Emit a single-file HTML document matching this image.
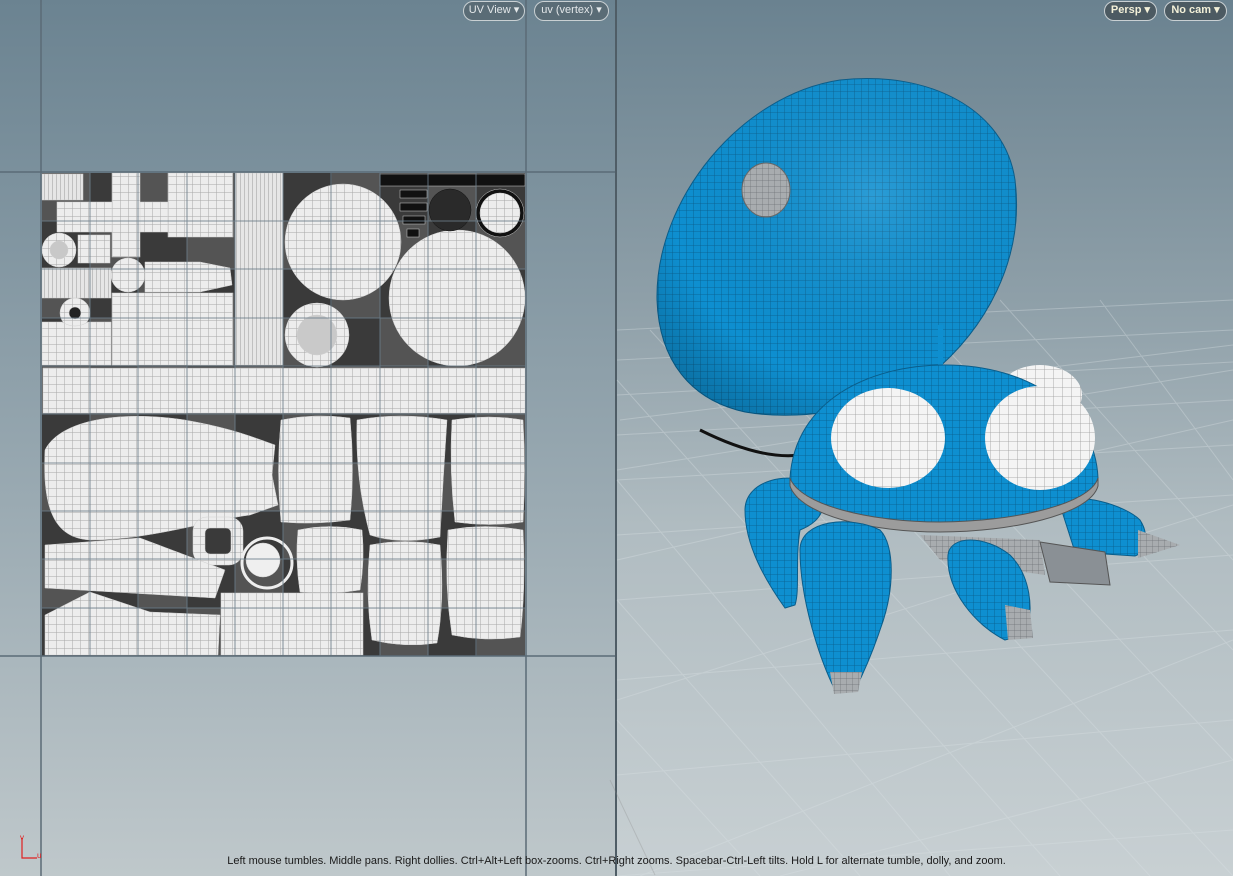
<!DOCTYPE html>
<html><head><meta charset="utf-8"><style>
html,body{margin:0;padding:0;width:1233px;height:876px;overflow:hidden;font-family:"Liberation Sans",sans-serif}
.pill{position:absolute;top:1px;height:20px;border:1.5px solid #c9d0d3;border-radius:10px;background:#5a6c76;color:#e4e8ea;font-size:11px;line-height:17px;padding:0;text-align:center;box-sizing:border-box;white-space:nowrap;overflow:hidden}
.pill.y{color:#f3f0d8;font-weight:bold;background:#4c5a62}
</style></head><body>
<svg width="1233" height="876" style="position:absolute;left:0;top:0">
<defs>
<linearGradient id="lbg" x1="0" y1="0" x2="0" y2="1"><stop offset="0" stop-color="#6b8391"/><stop offset="0.5" stop-color="#94a5ae"/><stop offset="1" stop-color="#bfc8cb"/></linearGradient>
<linearGradient id="rbg" x1="0" y1="0" x2="0" y2="1"><stop offset="0" stop-color="#6a8290"/><stop offset="0.35" stop-color="#8fa0a9"/><stop offset="0.6" stop-color="#b0bcc1"/><stop offset="1" stop-color="#c8d0d3"/></linearGradient>
<pattern id="chk" width="96.6" height="96.6" patternUnits="userSpaceOnUse" x="42" y="173"><rect width="96.6" height="96.6" fill="#3a3a3a"/><rect width="48.3" height="48.3" fill="#545454"/><rect x="48.3" y="48.3" width="48.3" height="48.3" fill="#545454"/></pattern>
<pattern id="g" width="8" height="8" patternUnits="userSpaceOnUse"><rect width="8" height="8" fill="#ededed"/><path d="M0 0H8M0 0V8" stroke="#a8a8a8" stroke-width="1"/></pattern>
<pattern id="gs" width="4" height="10" patternUnits="userSpaceOnUse"><rect width="4" height="10" fill="#e6e6e6"/><path d="M0 0V10" stroke="#999" stroke-width="1"/></pattern>
<pattern id="bl" width="7" height="7" patternUnits="userSpaceOnUse"><rect width="7" height="7" fill="#0e8fd0"/><path d="M0 0H7M0 0V7" stroke="#0a5d8a" stroke-width="0.8"/></pattern>
<pattern id="wh" width="9" height="9" patternUnits="userSpaceOnUse"><rect width="9" height="9" fill="#f4f4f4"/><path d="M0 0H9M0 0V9" stroke="#9a9a9a" stroke-width="0.8"/></pattern>
<pattern id="gr" width="6" height="6" patternUnits="userSpaceOnUse"><rect width="6" height="6" fill="#a8acaf"/><path d="M0 0H6M0 0V6" stroke="#6d7276" stroke-width="0.7"/></pattern>
<radialGradient id="shade" cx="0.6" cy="0.35" r="0.8"><stop offset="0" stop-color="#fff" stop-opacity="0.12"/><stop offset="0.7" stop-color="#000" stop-opacity="0"/><stop offset="1" stop-color="#000" stop-opacity="0.25"/></radialGradient>
</defs>
<rect x="0" y="0" width="616" height="876" fill="url(#lbg)"/>
<rect x="42" y="173" width="483" height="483" fill="url(#chk)"/>
<g stroke="#cfcfcf" stroke-width="0.5">
<rect x="42" y="174" width="41" height="26" fill="url(#gs)"/>
<rect x="57" y="202" width="111" height="30" fill="url(#g)"/>
<rect x="112" y="173" width="28" height="84" fill="url(#g)"/>
<rect x="168" y="173" width="65" height="64" fill="url(#g)"/>
<rect x="235" y="173" width="48" height="192" fill="url(#gs)"/>
<circle cx="343" cy="242" r="58" fill="url(#g)"/>
<circle cx="457" cy="298" r="68" fill="url(#g)"/>
<circle cx="317" cy="335" r="32" fill="url(#g)"/>
<circle cx="317" cy="335" r="20" fill="#c9c9c9"/>
<rect x="380" y="174" width="145" height="12" fill="#111"/>
<rect x="400" y="190" width="27" height="8" fill="#111"/><rect x="400" y="203" width="27" height="8" fill="#111"/><rect x="403" y="216" width="22" height="8" fill="#111"/><rect x="407" y="229" width="12" height="8" fill="#111"/>
<circle cx="450" cy="210" r="21" fill="#2a2a2a" stroke="#111"/>
<circle cx="500" cy="213" r="24" fill="#111"/><circle cx="500" cy="213" r="20" fill="url(#g)"/>
<circle cx="59" cy="250" r="17" fill="url(#g)"/><circle cx="59" cy="250" r="9" fill="#c8c8c8"/>
<rect x="78" y="235" width="32" height="28" fill="url(#g)"/>
<circle cx="128" cy="275" r="17" fill="url(#g)"/>
<path d="M145 262H200L230 268L232 285L200 292H145Z" fill="url(#g)"/>
<rect x="42" y="268" width="69" height="30" fill="url(#gs)"/>
<circle cx="75" cy="313" r="15" fill="url(#g)"/><circle cx="75" cy="313" r="6" fill="#222"/>
<path d="M42 322H62Q75 330 88 322H111V365H42Z" fill="url(#g)"/>
<rect x="112" y="293" width="121" height="72" fill="url(#g)"/>
<rect x="43" y="368" width="482" height="45" fill="url(#g)"/>
<path d="M45 450C60 420 120 410 185 420C230 428 250 436 275 445L272 475L278 505L250 515C210 520 150 540 90 540C55 538 42 510 45 450Z" fill="url(#g)"/>
<path d="M281 420Q315 413 350 418Q355 470 350 520Q315 525 281 522Q276 470 281 420Z" fill="url(#g)"/>
<path d="M357 420Q400 412 447 420Q443 480 440 537Q400 545 370 535Q355 480 357 420Z" fill="url(#g)"/>
<path d="M452 420Q490 414 523 420Q526 470 523 522Q490 527 455 522Q449 470 452 420Z" fill="url(#g)"/>
<path d="M298 530Q330 523 362 530Q365 560 360 590Q330 595 300 592Q295 560 298 530Z" fill="url(#g)"/>
<path d="M370 545Q405 538 440 545Q445 600 437 643Q405 648 372 640Q365 595 370 545Z" fill="url(#g)"/>
<path d="M448 530Q485 523 523 530Q526 590 520 637Q485 642 452 635Q444 585 448 530Z" fill="url(#g)"/>
<rect x="193" y="517" width="50" height="48" rx="14" fill="url(#g)"/><rect x="205" y="528" width="26" height="26" rx="5" fill="#3a3a3a"/>
<circle cx="267" cy="563" r="25" fill="none" stroke="#eee" stroke-width="3"/><circle cx="263" cy="560" r="17" fill="#efefef"/>
<path d="M45 545L140 538L225 570L215 598L45 588Z" fill="url(#g)"/>
<path d="M45 615L90 592L150 612L220 615L218 655H45Z" fill="url(#g)"/>
<rect x="221" y="593" width="142" height="62" fill="url(#g)"/>
</g>
<g stroke="#6b7d8a" stroke-width="1" opacity="0.85">
<path d="M90 173V656M138 173V656M187 173V656M235 173V656M283 173V656M331 173V656M380 173V656M428 173V656M476 173V656"/>
<path d="M42 221H525M42 269H525M42 318H525M42 366H525M42 414H525M42 463H525M42 511H525M42 559H525M42 608H525"/>
</g>
<g stroke="#5b6b76" stroke-width="1.5"><path d="M41 0V876M526 0V876M0 172H616M0 656H616"/></g>
<path d="M22 838V858H37" stroke="#e02020" fill="none" stroke-width="1.2"/>
<text x="20" y="840" fill="#e02020" font-size="8">v</text><text x="37" y="858" fill="#e02020" font-size="8">u</text>
<rect x="616" y="0" width="617" height="876" fill="url(#rbg)"/>
<rect x="615" y="0" width="2" height="876" fill="#4f5d66"/>
<g stroke="#dbe2e5" stroke-width="1" opacity="0.35" fill="none">
<path d="M617 330L1233 300M617 360L1233 330M617 395L1233 362M617 435L1233 400M617 480L1233 445M617 535L1233 495M617 600L1233 555M617 680L1233 630M617 775L1233 720M617 876L1233 830"/>
<path d="M640 876L1233 640M617 700L1233 505M617 560L1233 420M617 470L1233 370M780 876L1233 760M620 420L1233 345"/>
<path d="M1233 876L700 300M1150 876L650 330M1060 876L617 380M950 876L617 480M860 876L617 600M760 876L617 720M1233 760L800 300M1233 650L900 300M1233 560L1000 300M1233 480L1100 300"/>
</g>
<path d="M655 875L610 780" stroke="#888" opacity="0.3"/>
<!-- robot -->
<path d="M1060 505C1075 490 1125 505 1140 520C1150 535 1145 553 1135 556L1075 552Z" fill="url(#bl)" stroke="#0a5d8a"/>
<path d="M1138 530L1180 545L1138 558Z" fill="url(#gr)"/>
<path d="M920 535L1040 540L1045 575L940 560Z" fill="url(#gr)"/>
<path d="M1040 542L1105 552L1110 585L1050 582Z" fill="#8a9095" stroke="#555"/>
<path d="M745 510C745 480 790 470 815 485C830 500 825 520 800 530C795 560 800 590 795 605L785 608C765 580 745 545 745 510Z" fill="url(#bl)" stroke="#0a5d8a"/>
<path d="M657 300C655 200 740 95 840 80C930 70 1005 110 1015 180C1025 260 985 330 930 375C870 415 790 420 745 412C690 400 659 360 657 300Z" fill="url(#bl)" stroke="#0a5d8a"/>
<path d="M657 300C655 200 740 95 840 80C930 70 1005 110 1015 180C1025 260 985 330 930 375C870 415 790 420 745 412C690 400 659 360 657 300Z" fill="url(#shade)"/>
<path d="M700 430Q760 460 800 455" stroke="#111" stroke-width="3" fill="none"/>
<ellipse cx="766" cy="190" rx="24" ry="27" fill="url(#gr)" stroke="#666"/>
<rect x="938" y="325" width="5" height="45" fill="#0e8fd0"/>
<ellipse cx="1040" cy="395" rx="42" ry="30" fill="url(#wh)"/>
<path d="M948 555C950 535 985 535 1010 555C1030 575 1035 610 1025 635L1005 640C975 625 946 590 948 555Z" fill="url(#bl)" stroke="#0a5d8a"/>
<path d="M1005 605L1030 610L1033 638L1008 640Z" fill="url(#gr)"/>
<path d="M790 478C795 400 870 365 945 365C1030 365 1095 410 1098 478C1090 510 1000 530 940 528C870 528 795 510 790 478Z" fill="url(#bl)" stroke="#0a5d8a"/>
<path d="M790 478C800 505 870 522 940 522C1010 522 1090 505 1098 478L1098 486C1090 515 1010 532 940 532C870 532 800 515 790 486Z" fill="#9c9c9c" stroke="#555"/>
<ellipse cx="888" cy="438" rx="57" ry="50" fill="url(#wh)"/>
<ellipse cx="1040" cy="438" rx="55" ry="52" fill="url(#wh)"/>
<path d="M800 550C800 520 850 515 880 530C895 545 895 590 880 630C870 660 860 680 855 690L835 690C820 660 800 600 800 550Z" fill="url(#bl)" stroke="#0a5d8a"/>
<path d="M830 672L862 672L858 692L834 694Z" fill="url(#gr)"/>
</svg>
<div class="pill" style="left:463px;width:62px">UV View ▾</div>
<div class="pill" style="left:534px;width:75px">uv (vertex) ▾</div>
<div class="pill y" style="left:1104px;width:53px">Persp ▾</div>
<div class="pill y" style="left:1164px;width:63px">No cam ▾</div>
<div style="position:absolute;left:0;top:855px;width:1233px;text-align:center;font-size:11px;color:#1a1a1a">Left mouse tumbles. Middle pans. Right dollies. Ctrl+Alt+Left box-zooms. Ctrl+Right zooms. Spacebar-Ctrl-Left tilts. Hold L for alternate tumble, dolly, and zoom.</div>
</body></html>
